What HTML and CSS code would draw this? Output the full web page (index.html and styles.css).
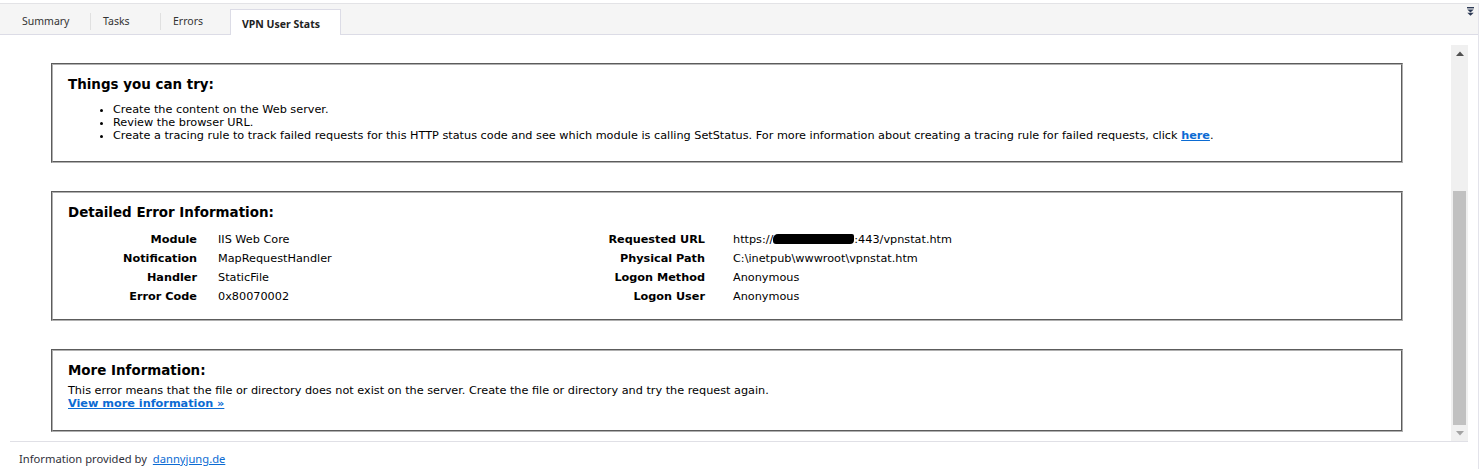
FILE: index.html
```html
<!doctype html>
<html lang="en">
  <head>
    <meta charset="UTF-8" />
    <meta name="viewport" content="width=device-width, initial-scale=1.0" />
    <title>VPN User Stats</title>
    <link rel="stylesheet" href="styles.css">
  </head>
  <body>
    <div class="panel">
      <!-- Tab strip -->
      <nav class="tabbar">
        <span class="tab tab-first">Summary</span>
        <span class="tab">Tasks</span>
        <span class="tab">Errors</span>
        <span class="tab is-active">VPN User Stats</span>
        <span class="tab-tools" title="Scroll to bottom">
          <svg width="7" height="9" viewBox="0 0 7 9">
            <rect x="0" y="0" width="7" height="1.4" fill="#2d3a55" />
            <path d="M0.3 2.6 H6.7 L3.5 5.4 Z" fill="#2d3a55" />
            <path d="M0.3 5.8 H6.7 L3.5 8.8 Z" fill="#2d3a55" />
          </svg>
        </span>
      </nav>

      <div class="frame-wrap">
        <div class="frame">
          <div class="frame-content">

            <!-- Things you can try -->
            <div class="info-box">
              <h4>Things you can try:</h4>
              <ul>
                <li>Create the content on the Web server.</li>
                <li>Review the browser URL.</li>
                <li>Create a tracing rule to track failed requests for this HTTP status code and see which module is calling SetStatus. For more information about creating a tracing rule for failed requests, click <a href="#">here</a>.</li>
              </ul>
            </div>

            <!-- Detailed error info -->
            <div class="info-box">
              <h4>Detailed Error Information:</h4>
              <div class="details">
                <dl class="details-left">
                  <dt>Module</dt><dd>IIS Web Core</dd>
                  <dt>Notification</dt><dd>MapRequestHandler</dd>
                  <dt>Handler</dt><dd>StaticFile</dd>
                  <dt>Error Code</dt><dd>0x80070002</dd>
                </dl>
                <dl class="details-right">
                  <dt>Requested URL</dt><dd>https://<span class="redact"></span>:443/vpnstat.htm</dd>
                  <dt>Physical Path</dt><dd>C:\inetpub\wwwroot\vpnstat.htm</dd>
                  <dt>Logon Method</dt><dd>Anonymous</dd>
                  <dt>Logon User</dt><dd>Anonymous</dd>
                </dl>
              </div>
            </div>

            <!-- More info -->
            <div class="info-box">
              <h4>More Information:</h4>
              <p>This error means that the file or directory does not exist on the server. Create the file or directory and try the request again.<br><a href="#">View more information &raquo;</a></p>
            </div>

          </div>

          <div class="scrollbar">
            <div class="scroll-btn">
              <svg width="8" height="5" viewBox="0 0 8 5"><path d="M0 5 L4 0.5 L8 5 Z" fill="#505050" /></svg>
            </div>
            <div class="scroll-track">
              <div class="scroll-thumb"></div>
            </div>
            <div class="scroll-btn">
              <svg width="8" height="5" viewBox="0 0 8 5"><path d="M0 0 L8 0 L4 4.5 Z" fill="#a3a3a3" /></svg>
            </div>
          </div>
        </div>

        <footer class="footer">
          Information provided by <a href="#">dannyjung.de</a>
        </footer>
      </div>
    </div>
  </body>
</html>
```

FILE: styles.css
```css
body {
  margin: 3px 2px 0 0;
  font-family: "Noto Sans", "Open Sans", sans-serif;
  color: #333;
  background: #fff;
}

.panel {
  border-top: 1px solid #e3e3e6;
  border-right: 1px solid #e3e3ea;
  height: 465px;
}

.tabbar {
  display: flex;
  align-items: flex-end;
  height: 30px;
  padding: 0 4px 0 10px;
  background-color: #f5f5f5;
  border-bottom: 1px solid #dcdce6;
}

.tab {
  box-sizing: border-box;
  width: 70px;
  height: 17px;
  line-height: 17px;
  margin-bottom: 4px;
  padding: 0 12px;
  font-size: 10.5px;
  color: #333;
}

.tab + .tab {
  border-left: 1px solid #e0e0e0;
}

.tab-first {
  width: 80px;
}

.tab.is-active {
  width: 111px;
  height: 26px;
  line-height: 29px;
  margin-bottom: -1px;
  padding: 0 11px;
  background-color: #fff;
  border: 1px solid #dcdce6;
  border-bottom: none;
  font-weight: bold;
  color: #222;
}

.tab-tools {
  flex: 1;
  display: flex;
  justify-content: flex-end;
  align-self: flex-start;
  padding-top: 3px;
  line-height: 0;
}

.frame-wrap {
  padding: 10px 10px 0 10px;
}

.frame {
  display: flex;
  height: 396px;
  border-bottom: 1px solid #e0e0e6;
}

.frame-content {
  flex: 1;
  min-width: 0;
  overflow: hidden;
  padding: 18px 0 0 41px;
  font-family: "DejaVu Sans", Verdana, sans-serif;
  font-size: 11.25px;
  line-height: 13px;
  color: #000;
}

.info-box {
  box-sizing: border-box;
  width: 1352px;
  padding: 0 15px 10px 15px;
  margin-bottom: 28px;
  border: 2px groove #b0b0b0;
}

.info-box h4 {
  margin: 12px 0 5px 0;
  font-size: 13.44px;
  line-height: 16px;
}

.info-box ul {
  margin: 10px 0 9px 0;
  padding-left: 45px;
}

.info-box p {
  margin: 5px 0 10px 0;
}

.info-box a {
  color: #0b6bd3;
  font-weight: bold;
}

.details {
  display: flex;
  margin: 12px 0 6px 0;
}

.details dl {
  display: grid;
  margin: 0;
  row-gap: 6px;
}

.details dt {
  text-align: right;
  font-weight: bold;
}

.details dd {
  margin: 0;
}

.details-left {
  width: 487px;
  grid-template-columns: 129px 1fr;
  column-gap: 21px;
}

.details-right {
  grid-template-columns: 150px 1fr;
  column-gap: 28px;
}

.redact {
  display: inline-block;
  width: 81px;
  height: 10px;
  vertical-align: -1px;
  background: #000;
  border-radius: 5px 2px 4px 3px;
}

.scrollbar {
  display: flex;
  flex-direction: column;
  width: 17px;
  background-color: #f0f0f0;
}

.scroll-btn {
  height: 16px;
  display: flex;
  align-items: center;
  justify-content: center;
}

.scroll-track {
  flex: 1;
  display: flex;
  flex-direction: column;
  justify-content: flex-end;
}

.scroll-thumb {
  height: 234px;
  margin: 0 2px;
  background-color: #c1c1c1;
}

.footer {
  padding: 9px 0 0 9px;
  font-size: 11.2px;
  line-height: 16px;
  color: #2f2f3a;
}

.footer a {
  margin-left: 3px;
  color: #0b6bd3;
}
```
